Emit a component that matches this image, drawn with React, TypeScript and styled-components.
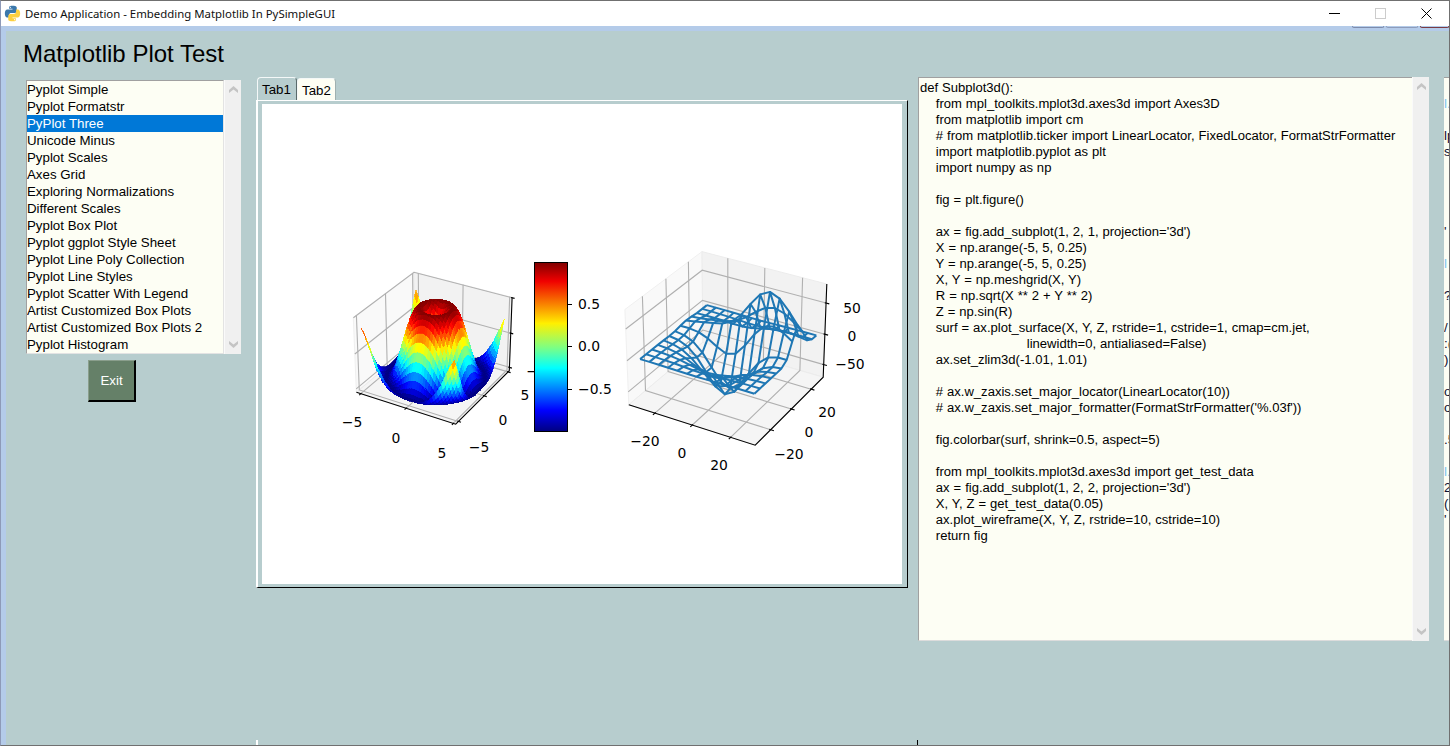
import React from 'react';
import styled, { createGlobalStyle } from 'styled-components';

const GlobalStyle = createGlobalStyle`
  html, body {
    margin: 0;
    padding: 0;
    background: #b7cdce;
    overflow: hidden;
  }
`;

const PLOTS = [
    'Pyplot Simple', 'Pyplot Formatstr', 'PyPlot Three', 'Unicode Minus', 'Pyplot Scales', 'Axes Grid',
    'Exploring Normalizations', 'Different Scales', 'Pyplot Box Plot', 'Pyplot ggplot Style Sheet',
    'Pyplot Line Poly Collection', 'Pyplot Line Styles', 'Pyplot Scatter With Legend',
    'Artist Customized Box Plots', 'Artist Customized Box Plots 2', 'Pyplot Histogram',
];

const CODE = `def Subplot3d():
    from mpl_toolkits.mplot3d.axes3d import Axes3D
    from matplotlib import cm
    # from matplotlib.ticker import LinearLocator, FixedLocator, FormatStrFormatter
    import matplotlib.pyplot as plt
    import numpy as np

    fig = plt.figure()

    ax = fig.add_subplot(1, 2, 1, projection='3d')
    X = np.arange(-5, 5, 0.25)
    Y = np.arange(-5, 5, 0.25)
    X, Y = np.meshgrid(X, Y)
    R = np.sqrt(X ** 2 + Y ** 2)
    Z = np.sin(R)
    surf = ax.plot_surface(X, Y, Z, rstride=1, cstride=1, cmap=cm.jet,
                           linewidth=0, antialiased=False)
    ax.set_zlim3d(-1.01, 1.01)

    # ax.w_zaxis.set_major_locator(LinearLocator(10))
    # ax.w_zaxis.set_major_formatter(FormatStrFormatter('%.03f'))

    fig.colorbar(surf, shrink=0.5, aspect=5)

    from mpl_toolkits.mplot3d.axes3d import get_test_data
    ax = fig.add_subplot(1, 2, 2, projection='3d')
    X, Y, Z = get_test_data(0.05)
    ax.plot_wireframe(X, Y, Z, rstride=10, cstride=10)
    return fig`;

// what is left visible of the next column, cut by the window edge
const CLIPPED_LINES: { row: number; text: string; tint?: boolean }[] = [
    { row: 1, text: 'l.', tint: true },
    { row: 3, text: 'lp' },
    { row: 4, text: 's' },
    { row: 9, text: "'" },
    { row: 11, text: 'l', tint: true },
    { row: 13, text: '?)' },
    { row: 15, text: '/' },
    { row: 16, text: ':(' },
    { row: 17, text: ')' },
    { row: 19, text: 'o' },
    { row: 20, text: 'o' },
    { row: 22, text: '.5' },
    { row: 24, text: 'l.', tint: true },
    { row: 25, text: '2' },
    { row: 26, text: '(' },
    { row: 27, text: "'" },
];

/* ---------- small 3d projection, same view as mplot3d (elev 30, azim -60) ---------- */

type Axes3D = {
    scale: number
    cx: number
    cy: number
    xlim: [number, number]
    ylim: [number, number]
    zlim: [number, number]
}

const project = (ax: Axes3D, x: number, y: number, z: number): [number, number, number] => {
    const nx = (x - ax.xlim[0]) / (ax.xlim[1] - ax.xlim[0]) - 0.5;
    const ny = (y - ax.ylim[0]) / (ax.ylim[1] - ax.ylim[0]) - 0.5;
    const nz = ((z - ax.zlim[0]) / (ax.zlim[1] - ax.zlim[0]) - 0.5) * 0.75;
    const depth = 0.433 * nx - 0.75 * ny + 0.5 * nz;
    const f = 10 / (10 - depth);
    const u = 0.866 * nx + 0.5 * ny;
    const v = -0.25 * nx + 0.433 * ny + 0.866 * nz;
    return [ax.cx + ax.scale * u * f, ax.cy - ax.scale * v * f, depth];
};

const pts = (ax: Axes3D, list: number[][]) =>
    list.map(([x, y, z]) => {
        const p = project(ax, x, y, z);
        return `${p[0].toFixed(1)},${p[1].toFixed(1)}`;
    }).join(' ');

const jet = (t: number) => {
    const c = (v: number) => Math.round(255 * Math.max(0, Math.min(1, v)));
    const r = 1.5 - Math.abs(4 * t - 3);
    const g = 1.5 - Math.abs(4 * t - 2);
    const b = 1.5 - Math.abs(4 * t - 1);
    return `rgb(${c(r)},${c(g)},${c(b)})`;
};

const range = (from: number, to: number, step: number) => {
    const out: number[] = [];
    for (let v = from; v <= to + 1e-9; v += step) out.push(v);
    return out;
};

const bivariate = (x: number, y: number, sx: number, sy: number, mx: number, my: number) => {
    const a = (x - mx) / sx;
    const b = (y - my) / sy;
    return Math.exp(-(a * a + b * b) / 2) / (2 * Math.PI * sx * sy);
};

type FrameProps = { ax: Axes3D; xticks: number[]; yticks: number[]; zticks: number[] };

const AxesFrame = ({ ax, xticks, yticks, zticks }: FrameProps) => {
    const [x0, x1] = ax.xlim;
    const [y0, y1] = ax.ylim;
    const [z0, z1] = ax.zlim;
    const dx = (x1 - x0) * 0.025;
    const dy = (y1 - y0) * 0.025;
    return (
        <g>
            <polygon points={pts(ax, [[x0, y0, z0], [x0, y1, z0], [x0, y1, z1], [x0, y0, z1]])} fill="#f9f9f9" stroke="#f0f0f0" />
            <polygon points={pts(ax, [[x0, y1, z0], [x1, y1, z0], [x1, y1, z1], [x0, y1, z1]])} fill="#f2f2f2" stroke="#ececec" />
            <polygon points={pts(ax, [[x0, y0, z0], [x1, y0, z0], [x1, y1, z0], [x0, y1, z0]])} fill="#f5f5f5" stroke="#ececec" />
            <g fill="none" stroke="#b0b0b0" strokeWidth="1.1">
                {xticks.map((t) => <polyline key={t} points={pts(ax, [[t, y0, z0], [t, y1, z0], [t, y1, z1]])} />)}
                {yticks.map((t) => <polyline key={t} points={pts(ax, [[x1, t, z0], [x0, t, z0], [x0, t, z1]])} />)}
                {zticks.map((t) => <polyline key={t} points={pts(ax, [[x0, y0, t], [x0, y1, t], [x1, y1, t]])} />)}
            </g>
            <g fill="none" stroke="#000" strokeWidth="1.1">
                <polyline points={pts(ax, [[x0, y0, z0], [x1, y0, z0], [x1, y1, z0], [x1, y1, z1]])} />
                {xticks.map((t) => <polyline key={t} points={pts(ax, [[t, y0 + dy * 0.4, z0], [t, y0 - dy, z0]])} />)}
                {yticks.map((t) => <polyline key={t} points={pts(ax, [[x1 - dx * 0.4, t, z0], [x1 + dx, t, z0]])} />)}
                {zticks.map((t) => <polyline key={t} points={pts(ax, [[x1 - dx * 0.4, y1, t], [x1 + dx, y1, t]])} />)}
            </g>
        </g>
    );
};

const surfaceAxes: Axes3D = { scale: 114, cx: 172, cy: 241, xlim: [-5.5, 5.25], ylim: [-5.5, 5.25], zlim: [-1.1, 1.01] };
const wireAxes: Axes3D = { scale: 145, cx: 465.5, cy: 240.5, xlim: [-34.3, 32.5], ylim: [-34.3, 32.5], zlim: [-71, 80] };

const SurfacePlot = () => {
    const cells: { d: number; points: string; color: string }[] = [];
    const grid = range(-5, 4.75, 0.25);
    const h = (x: number, y: number) => Math.sin(Math.sqrt(x * x + y * y));
    grid.slice(0, -1).forEach((x) => {
        grid.slice(0, -1).forEach((y) => {
            const corners = [[x, y], [x + 0.25, y], [x + 0.25, y + 0.25], [x, y + 0.25]].map(([a, b]) => [a, b, h(a, b)]);
            const avg = corners.reduce((sum, c) => sum + c[2], 0) / 4;
            const d = project(surfaceAxes, x + 0.125, y + 0.125, avg)[2];
            cells.push({ d, points: pts(surfaceAxes, corners), color: jet((avg + 1) / 2) });
        });
    });
    cells.sort((a, b) => a.d - b.d);
    return (
        <g shapeRendering="crispEdges">
            {cells.map((c, i) => <polygon key={i} points={c.points} fill={c.color} stroke={c.color} strokeWidth="0.8" />)}
        </g>
    );
};

const WirePlot = () => {
    const axis = [...range(-3, 2.5, 0.5), 2.95];
    const z = (x: number, y: number) =>
        (bivariate(x, y, 1.5, 0.5, 1, 1) - bivariate(x, y, 1, 1, 0, 0)) * 500;
    const rows = axis.map((y) => axis.map((x) => [x * 10, y * 10, z(x, y)]));
    const cols = axis.map((x) => axis.map((y) => [x * 10, y * 10, z(x, y)]));
    return (
        <g fill="none" stroke="#1f77b4" strokeWidth="2" strokeLinejoin="round">
            {[...rows, ...cols].map((line, i) => <polyline key={i} points={pts(wireAxes, line)} />)}
        </g>
    );
};

const JET_STOPS = [0, 0.11, 0.125, 0.35, 0.375, 0.5, 0.64, 0.66, 0.89, 1];

// labels are placed where matplotlib put them, in canvas pixels
const LABELS: [string, number, number][] = [
    ['\u22125', 90, 318], ['0', 134, 334], ['5', 180, 349],
    ['\u22125', 217, 343], ['0', 241, 316], ['5', 263, 291],
    ['\u2212', 270, 267],
    ['\u221220', 383, 337], ['0', 420, 349], ['20', 457, 361],
    ['\u221220', 527, 350], ['0', 547, 328], ['20', 565, 308],
    ['50', 590, 204], ['0', 590, 232], ['\u221250', 588, 260],
];

const BAR_LABELS: [string, number][] = [['0.5', 200], ['0.0', 242], ['\u22120.5', 285]];

const Figure = () => (
    <svg width="640" height="480" viewBox="0 0 640 480">
        <defs>
            <linearGradient id="jetBar" x1="0" y1="1" x2="0" y2="0">
                {JET_STOPS.map((s) => <stop key={s} offset={s} stopColor={jet(s)} />)}
            </linearGradient>
        </defs>
        <AxesFrame ax={surfaceAxes} xticks={[-5, 0, 5]} yticks={[-5, 0, 5]} zticks={[-1, 0, 1]} />
        <SurfacePlot />
        <AxesFrame ax={wireAxes} xticks={[-20, 0, 20]} yticks={[-20, 0, 20]} zticks={[-50, 0, 50]} />
        <WirePlot />
        <g fontFamily="'DejaVu Sans', sans-serif" fontSize="13.9" fill="#000">
            {BAR_LABELS.map(([t, y]) => <text key={t} x="316" y={y + 5}>{t}</text>)}
            {LABELS.map(([t, x, y], i) => <text key={i} x={x} y={y + 5} textAnchor="middle">{t}</text>)}
        </g>
        <rect x="272.5" y="158.5" width="33" height="169" fill="url(#jetBar)" stroke="#000" />
        <g stroke="#000">
            {BAR_LABELS.map(([t, y]) => <line key={t} x1="306" x2="310" y1={y + 0.5} y2={y + 0.5} />)}
        </g>
    </svg>
);

/* ---------- window chrome ---------- */

const PythonLogo = () => (
    <svg width="17" height="17" viewBox="0 0 16 16">
        <path fill="#3b78ab" d="M7.9 .6C4.6 .6 4.8 2 4.8 2V3.6H8V4.2H3.5C3.5 4.2 .8 3.9 .8 8C.8 11.9 3.1 11.8 3.1 11.8H4.6V9.9C4.6 9.9 4.5 7.6 6.8 7.6H9.9C9.9 7.6 12 7.6 12 5.6V2.4C12 2.4 12.3 .6 7.9 .6Z" />
        <circle cx="6" cy="2.2" r=".6" fill="#fff" />
        <g transform="rotate(180 8 8)">
            <path fill="#fdd040" d="M7.9 .6C4.6 .6 4.8 2 4.8 2V3.6H8V4.2H3.5C3.5 4.2 .8 3.9 .8 8C.8 11.9 3.1 11.8 3.1 11.8H4.6V9.9C4.6 9.9 4.5 7.6 6.8 7.6H9.9C9.9 7.6 12 7.6 12 5.6V2.4C12 2.4 12.3 .6 7.9 .6Z" />
            <circle cx="6" cy="2.2" r=".6" fill="#fff" />
        </g>
    </svg>
);

const Chevron = ({ down }: { down?: boolean }) => (
    <svg width="9" height="7" viewBox="0 0 9 7">
        <path d={down ? 'M0 0L4.5 3.5L9 0V3L4.5 7L0 3Z' : 'M0 7L4.5 3.5L9 7V4L4.5 0L0 4Z'} fill="#c4c4c4" />
    </svg>
);

const Scrollbar = () => (
    <ScrollTrack>
        <Chevron />
        <Chevron down />
    </ScrollTrack>
);

export default function App() {
    return (
        <Window>
            <GlobalStyle />
            <TitleBar>
                <PythonLogo />
                <TitleText>Demo Application - Embedding Matplotlib In PySimpleGUI</TitleText>
                <WindowButton>
                    <svg width="11" height="11" viewBox="0 0 11 11"><path d="M0 5.5H11" stroke="#000" /></svg>
                </WindowButton>
                <WindowButton>
                    <svg width="11" height="11" viewBox="0 0 11 11"><rect x=".5" y=".5" width="10" height="10" fill="none" stroke="#ccc" /></svg>
                </WindowButton>
                <WindowButton>
                    <svg width="11" height="11" viewBox="0 0 11 11"><path d="M.5 .5L10.5 10.5M10.5 .5L.5 10.5" stroke="#000" /></svg>
                </WindowButton>
            </TitleBar>
            <BehindStrip>
                <BehindButton $color="#7d8bac" />
                <BehindButton $color="#8d9cbc" />
                <BehindButton $color="#7a3a44" $wide />
            </BehindStrip>
            <Client>
                <Heading>Matplotlib Plot Test</Heading>
                <Columns>
                    <LeftColumn>
                        <ListFrame>
                            <ListBox>
                                {PLOTS.map((name) => (
                                    <ListRow key={name} $selected={name === 'PyPlot Three'}>{name}</ListRow>
                                ))}
                            </ListBox>
                            <Scrollbar />
                        </ListFrame>
                        <ExitButton>Exit</ExitButton>
                    </LeftColumn>
                    <TabGroup>
                        <TabRow>
                            <Tab $active>Tab1</Tab>
                            <Tab>Tab2</Tab>
                        </TabRow>
                        <TabPane>
                            <Canvas><Figure /></Canvas>
                        </TabPane>
                    </TabGroup>
                    <CodeFrame>
                        <CodeText>{CODE}</CodeText>
                        <Scrollbar />
                    </CodeFrame>
                    <ClippedColumn>
                        {range(0, 34, 1).map((row) => {
                            const line = CLIPPED_LINES.find((l) => l.row === row);
                            return <ClippedLine key={row} $tint={line?.tint}>{line ? line.text : '\u00a0'}</ClippedLine>;
                        })}
                    </ClippedColumn>
                </Columns>
                <BottomEdge>
                    <EdgeTick $color="#fff" $left={250} $width={2} />
                    <EdgeTick $color="#000" $left={659} $width={1} />
                </BottomEdge>
            </Client>
        </Window>
    );
}

const Window = styled.div`
  width: 1450px;
  height: 746px;
  box-sizing: border-box;
  display: flex;
  flex-direction: column;
  border-top: 1px solid #707070;
  border-right: 1px solid #707070;
  border-bottom: 1px solid #707070;
  border-left: 1px solid #8e9ab8;
  background: #b4cbe9;
  overflow: hidden;
`;

const TitleBar = styled.div`
  height: 25px;
  flex: none;
  display: flex;
  align-items: center;
  padding-left: 3px;
  background: #fff;
`;

const TitleText = styled.span`
  flex: 1;
  margin-left: 4px;
  font: 11.4px "Noto Sans", sans-serif;
  color: #101010;
  white-space: nowrap;
`;

const WindowButton = styled.div`
  width: 46px;
  height: 25px;
  display: flex;
  align-items: center;
  justify-content: center;
`;

const BehindStrip = styled.div`
  height: 5px;
  flex: none;
  display: flex;
  justify-content: flex-end;
  gap: 2px;
  background: #b4cbe9;
`;

const BehindButton = styled.div<{ $color: string; $wide?: boolean }>`
  width: ${(p) => (p.$wide ? 29 : 32)}px;
  height: 2px;
  box-sizing: border-box;
  border: 1px solid ${(p) => p.$color};
  border-top: none;
  border-radius: 0 0 2px 2px;
`;

const Client = styled.div`
  flex: 1;
  min-height: 0;
  display: flex;
  flex-direction: column;
  margin-left: 5px;
  background: #b7cdce;
`;

const Heading = styled.h1`
  height: 46px;
  margin: 0;
  padding-left: 17px;
  font: 400 24px/46px "Liberation Sans", Arial, sans-serif;
  color: #000;
`;

const Columns = styled.div`
  display: flex;
  align-items: flex-start;
`;

const LeftColumn = styled.div`
  width: 215px;
  margin: 3px 0 0 20px;
`;

const ListFrame = styled.div`
  display: flex;
  height: 274px;
`;

const ListBox = styled.ul`
  width: 198px;
  margin: 0;
  padding: 0;
  list-style: none;
  box-sizing: border-box;
  background: #fdfef4;
  border-top: 1px solid #a0a0a0;
  border-left: 1px solid #a0a0a0;
  border-bottom: 1px solid #e3e3e3;
  border-right: 1px solid #e3e3e3;
  overflow: hidden;
`;

const ListRow = styled.li<{ $selected?: boolean }>`
  height: 17px;
  font: 13.3px/17px "Liberation Sans", Arial, sans-serif;
  white-space: nowrap;
  color: ${(p) => (p.$selected ? '#fff' : '#000')};
  background: ${(p) => (p.$selected ? '#0078d7' : 'transparent')};
`;

const ScrollTrack = styled.div`
  width: 17px;
  flex: none;
  display: flex;
  flex-direction: column;
  justify-content: space-between;
  align-items: center;
  box-sizing: border-box;
  padding: 6px 0;
  background: #f0f0f0;
  border-left: 1px solid #fafafa;
`;

const ExitButton = styled.button`
  display: block;
  width: 48px;
  height: 42px;
  margin: 6px 0 0 62px;
  padding: 0;
  box-sizing: border-box;
  background: #658068;
  color: #fff;
  font: 13.3px "Liberation Sans", Arial, sans-serif;
  border-style: solid;
  border-width: 1px 2px 2px 1px;
  border-color: #8a9e8c #000 #000 #8a9e8c;
`;

const TabGroup = styled.div`
  width: 652px;
  margin-left: 15px;
`;

const TabRow = styled.div`
  height: 23px;
  display: flex;
  align-items: flex-end;
  padding-left: 1px;
`;

const Tab = styled.div<{ $active?: boolean }>`
  height: ${(p) => (p.$active ? 23 : 22)}px;
  width: ${(p) => (p.$active ? 40 : 39)}px;
  box-sizing: border-box;
  padding-left: 4px;
  font: 13.3px/23px "Liberation Sans", Arial, sans-serif;
  color: #000;
  background: ${(p) => (p.$active ? '#b7cdce' : '#fdfef4')};
  border: 1px solid #f4f8f8;
  border-bottom: none;
  border-right-color: ${(p) => (p.$active ? '#5a6a6a' : '#9fb0b0')};
  border-radius: 4px 4px 0 0;
`;

const TabPane = styled.div`
  box-sizing: border-box;
  height: 488px;
  padding: 3px 5px 3px 4px;
  border-style: solid;
  border-width: 1px 1px 1px 2px;
  border-color: #fff #000 #000 #fff;
`;

const Canvas = styled.div`
  width: 640px;
  height: 480px;
  background: #fff;

  svg {
    display: block;
  }
`;

const CodeFrame = styled.div`
  display: flex;
  width: 511px;
  height: 564px;
  margin-left: 10px;
`;

const CodeText = styled.pre`
  width: 494px;
  height: 100%;
  margin: 0;
  padding: 2px 0 0 1px;
  box-sizing: border-box;
  font: 13.05px/16px "Liberation Sans", Arial, sans-serif;
  word-spacing: 0.33px;
  color: #000;
  background: #fdfef4;
  border-top: 1px solid #a0a0a0;
  border-left: 1px solid #a0a0a0;
  border-bottom: 1px solid #dcdcdc;
  overflow: hidden;
`;

const ClippedColumn = styled.div`
  width: 5px;
  height: 564px;
  margin-left: 15px;
  padding-top: 2px;
  box-sizing: border-box;
  background: #fdfef4;
  border-top: 1px solid #a0a0a0;
  border-bottom: 1px solid #dcdcdc;
  overflow: hidden;
`;

const ClippedLine = styled.div<{ $tint?: boolean }>`
  height: 16px;
  font: 13.3px/16px "Liberation Sans", Arial, sans-serif;
  white-space: nowrap;
  color: ${(p) => (p.$tint ? '#7cc4f0' : '#101030')};
`;

const BottomEdge = styled.div`
  margin-top: auto;
  height: 5px;
  display: flex;
`;

const EdgeTick = styled.div<{ $color: string; $left: number; $width: number }>`
  width: ${(p) => p.$width}px;
  margin-left: ${(p) => p.$left}px;
  background: ${(p) => p.$color};
`;
